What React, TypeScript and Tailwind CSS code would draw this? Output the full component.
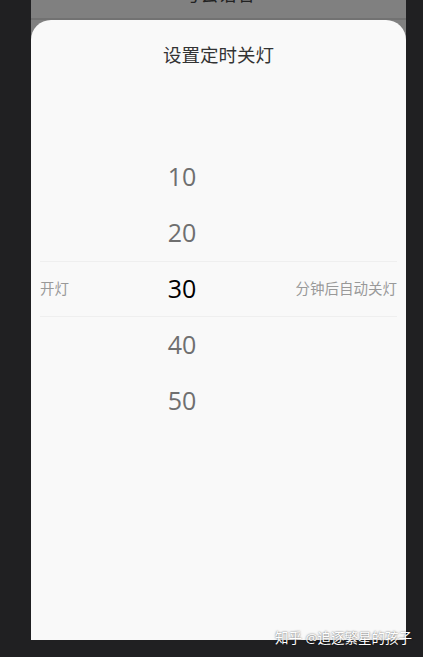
import { ChevronLeft } from 'lucide-react'

const values = [10, 20, 30, 40, 50]

export default function App() {
  return (
    <div
      className="relative h-[657px] w-[423px] overflow-hidden bg-[#202022]"
      style={{ fontFamily: '"Open Sans", "Noto Sans CJK SC", sans-serif' }}
    >
      <div className="ml-[31px] flex h-[640px] w-[375px] flex-col bg-[#808080]">
        {/* header, mostly scrolled off */}
        <div className="relative h-[18px] overflow-hidden">
          <ChevronLeft className="absolute left-[24px] top-[-16px] h-5 w-5 text-[#222]" strokeWidth={2} />
          <div className="mt-[-18px] text-center text-[18px] leading-[24px] text-[#222]">号会话名</div>
        </div>
        <div className="h-[2px] bg-[#727272]" />

        {/* bottom sheet */}
        <div className="flex flex-1 flex-col rounded-t-[20px] bg-[#f9f9f9] px-[9px]">
          <div className="pt-[23px] text-center text-[18.5px] leading-[24px] text-[#333]">设置定时关灯</div>

          <div className="relative mt-[82px] flex">
            <div className="absolute left-0 right-0 top-[112px] h-[56px] border-y border-[#efefef]" />
            <div className="flex w-[100px] items-center text-[14.5px] text-[#999]">开灯</div>
            <div className="flex w-[84px] flex-col">
              {values.map(v => (
                <div
                  key={v}
                  className={
                    'flex h-[56px] items-center justify-center text-[25px] ' +
                    (v === 30 ? 'text-black' : 'text-[#6f6f6f]')
                  }
                >
                  {v}
                </div>
              ))}
            </div>
            <div className="flex flex-1 items-center justify-end text-[14.5px] text-[#999]">分钟后自动关灯</div>
          </div>
        </div>
      </div>

      <div
        className="absolute left-[275px] top-[628px] text-[13.5px] leading-[20px] text-white"
        style={{ textShadow: '0 0 2px rgba(0,0,0,0.7)' }}
      >
        知乎 @追逐繁星的孩子
      </div>
    </div>
  )
}
